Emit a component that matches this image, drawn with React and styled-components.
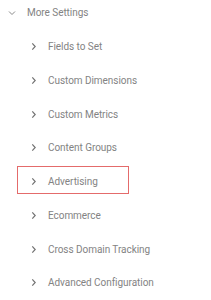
import styled, { createGlobalStyle } from 'styled-components'

const Global = createGlobalStyle`
  body {
    margin: 0;
    background: #fff;
    font-family: Roboto, "Liberation Sans", sans-serif;
  }
`

const List = styled.div`
  display: flex;
  flex-direction: column;
  margin-top: -4px;
`

const Row = styled.div`
  height: 33.75px;
  display: flex;
  align-items: center;
  padding-left: ${p => (p.sub ? '17px' : '7px')};
  box-sizing: border-box;
`

const Item = styled.div`
  display: flex;
  align-items: center;
  box-sizing: border-box;
  height: 28px;
  width: ${p => (p.sub ? '112px' : 'auto')};
  padding-left: ${p => (p.sub ? '13px' : '0')};
  padding-top: ${p => (p.sub ? '3px' : '0')};
  margin-top: ${p => (p.sub ? '-3px' : '0')};
  border: 1px solid ${p => (p.active ? '#e46b6b' : 'transparent')};
`

const Icon = styled.span`
  display: flex;
  flex-shrink: 0;
  width: ${p => (p.sub ? '17px' : '19px')};
`

const Label = styled.span`
  font-size: 10px;
  color: #838383;
  white-space: nowrap;
  letter-spacing: -0.05px;
`

const Right = () => (
  <svg width="6" height="9" viewBox="0 0 6 9">
    <path d="M1.3 1.3 L4.2 4.5 L1.3 7.7" fill="none" stroke="#707070" strokeWidth="1.15" />
  </svg>
)

const Down = () => (
  <svg width="8" height="6" viewBox="0 0 8 6">
    <path d="M1 1.5 L4 4.5 L7 1.5" fill="none" stroke="#8a8a8a" strokeWidth="1" />
  </svg>
)

const items = [
  'Fields to Set',
  'Custom Dimensions',
  'Custom Metrics',
  'Content Groups',
  'Advertising',
  'Ecommerce',
  'Cross Domain Tracking',
  'Advanced Configuration',
]

export default function App() {
  return (
    <>
      <Global />
      <List>
        <Row>
          <Item>
            <Icon><Down /></Icon>
            <Label>More Settings</Label>
          </Item>
        </Row>
        {items.map(name => (
          <Row sub key={name}>
            <Item sub active={name === 'Advertising'}>
              <Icon sub><Right /></Icon>
              <Label>{name}</Label>
            </Item>
          </Row>
        ))}
      </List>
    </>
  )
}
